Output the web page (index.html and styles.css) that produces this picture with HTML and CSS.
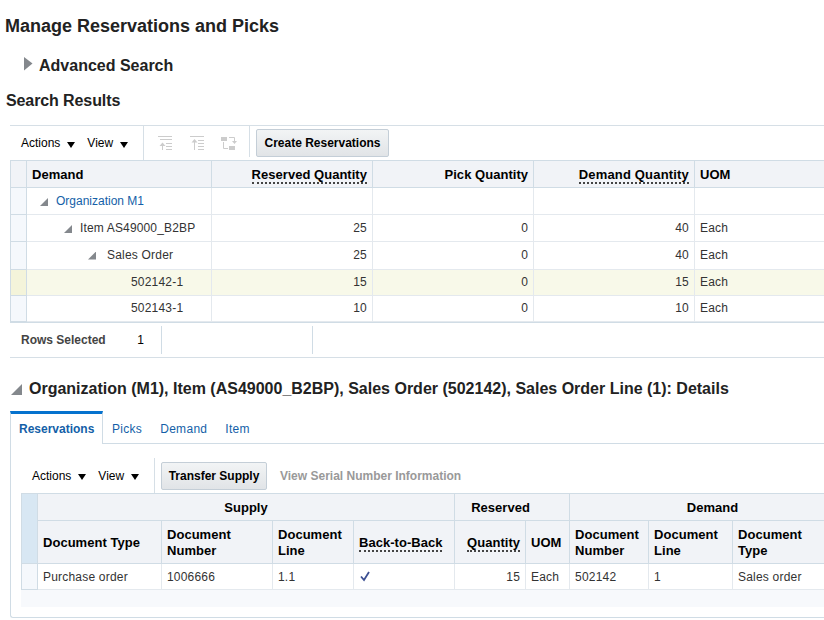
FILE: index.html
```html
<!DOCTYPE html>
<html lang="en">
<head>
    <meta charset="UTF-8">
    <title>Manage Reservations and Picks</title>
    <link rel="stylesheet" href="styles.css">
</head>
<body>
    <main>
        <h1><span>Manage Reservations and Picks</span></h1>
        <h2 class="advanced">
            <svg class="closed" width="9" height="14" viewBox="0 0 9 14"><path d="M0 0L8.500 6.500L0 13.500z"/></svg>
            <span>Advanced Search</span>
        </h2>
        <h2 class="results-title"><span>Search Results</span></h2>

        <section class="results">
            <div class="toolbar">
                <div class="menus">
                    <a class="menu">Actions</a>
                    <a class="menu">View</a>
                </div>
                <div class="icons">
                    <svg width="16" height="16" viewBox="0 0 16 16"><path d="M1 1.500h14M3 4.500h12M9 8.500h6M9 11.500h6M9 14.500h6M5.500 9v6"/><path class="fill" d="M2.500 11L5.500 7.500l3 3.500z"/></svg>
                    <svg width="16" height="16" viewBox="0 0 16 16"><path d="M1 1.500h14M9 5.500h6M9 8.500h6M9 11.500h6M9 14.500h6M5.500 5v10"/><path class="fill" d="M2.500 7.500L5.500 4l3 3.500z"/></svg>
                    <svg width="16" height="16" viewBox="0 0 16 16"><path class="fill" d="M0 2h6v4H0zM8 11h6v4H8z"/><path d="M2.500 7v6.500H7M8 2.500h5.500V6"/><path class="fill" d="M11 6h5l-2.500 3z"/></svg>
                </div>
                <button class="button">Create Reservations</button>
            </div>
            <table class="demand-table">
                <colgroup>
                    <col class="w-handle"><col class="w-demand"><col class="w-qty"><col class="w-qty"><col class="w-qty"><col>
                </colgroup>
                <thead>
                    <tr>
                        <th></th>
                        <th>Demand</th>
                        <th class="num"><span class="dotted">Reserved Quantity</span></th>
                        <th class="num">Pick Quantity</th>
                        <th class="num"><span class="dotted wide">Demand Quantity</span></th>
                        <th>UOM</th>
                    </tr>
                </thead>
                <tbody>
                    <tr>
                        <td></td>
                        <td class="level-1"><i class="open"></i><a>Organization M1</a></td>
                        <td></td><td></td><td></td><td></td>
                    </tr>
                    <tr>
                        <td></td>
                        <td class="level-2"><i class="open"></i>Item AS49000_B2BP</td>
                        <td class="num">25</td><td class="num">0</td><td class="num">40</td><td>Each</td>
                    </tr>
                    <tr class="tall">
                        <td></td>
                        <td class="level-3"><i class="open"></i>Sales Order</td>
                        <td class="num">25</td><td class="num">0</td><td class="num">40</td><td>Each</td>
                    </tr>
                    <tr class="short selected">
                        <td></td>
                        <td class="level-4">502142-1</td>
                        <td class="num">15</td><td class="num">0</td><td class="num">15</td><td>Each</td>
                    </tr>
                    <tr class="short">
                        <td></td>
                        <td class="level-4">502143-1</td>
                        <td class="num">10</td><td class="num">0</td><td class="num">10</td><td>Each</td>
                    </tr>
                </tbody>
            </table>
            <div class="status">
                <div class="status-rows"><b>Rows Selected</b><span>1</span></div>
                <div class="status-empty"></div>
            </div>
        </section>

        <h2 class="details-title"><i class="open big"></i><span>Organization (M1), Item (AS49000_B2BP), Sales Order (502142), Sales Order Line (1): Details</span></h2>
        <nav class="tabs">
            <a class="tab active">Reservations</a>
            <div class="tab-rest">
                <a class="tab">Picks</a>
                <a class="tab">Demand</a>
                <a class="tab">Item</a>
            </div>
        </nav>
        <section class="panel">
            <div class="toolbar">
                <div class="menus">
                    <a class="menu">Actions</a>
                    <a class="menu">View</a>
                </div>
                <button class="button">Transfer Supply</button>
                <span class="disabled">View Serial Number Information</span>
            </div>
            <div class="supply-wrap">
                <table class="supply-table">
                    <colgroup>
                        <col class="w-handle"><col class="w-type"><col class="w-number"><col class="w-line"><col class="w-back"><col class="w-quantity"><col class="w-uom"><col class="w-dnumber"><col class="w-dline"><col>
                    </colgroup>
                    <thead>
                        <tr class="groups">
                            <th rowspan="2" class="corner"></th>
                            <th colspan="4">Supply</th>
                            <th colspan="2" class="reserved">Reserved</th>
                            <th colspan="3">Demand</th>
                        </tr>
                        <tr class="columns">
                            <th>Document Type</th>
                            <th>Document<br>Number</th>
                            <th>Document<br>Line</th>
                            <th><span class="dotted">Back-to-Back</span></th>
                            <th class="num"><span class="dotted">Quantity</span></th>
                            <th>UOM</th>
                            <th>Document<br>Number</th>
                            <th>Document<br>Line</th>
                            <th>Document<br>Type</th>
                        </tr>
                    </thead>
                    <tbody>
                        <tr>
                            <td></td>
                            <td>Purchase order</td>
                            <td>1006666</td>
                            <td>1.1</td>
                            <td><svg class="check" width="12" height="11" viewBox="0 0 12 11"><path d="M2 5.500l3 3.500L10 1"/></svg></td>
                            <td class="num">15</td>
                            <td>Each</td>
                            <td>502142</td>
                            <td>1</td>
                            <td>Sales order</td>
                        </tr>
                    </tbody>
                </table>
            </div>
        </section>
    </main>
</body>
</html>
```
FILE: styles.css
```css
* {
    box-sizing: border-box;
}
body {
    margin: 0;
    background: #fff;
    color: #333;
    font: 12px/16px "Liberation Sans", Arial, sans-serif;
    overflow: hidden;
}
main {
    height: 620px;
    overflow: hidden;
    padding-top: 12px;
}
h1, h2 {
    margin: 0;
    color: #222;
    font-size: 16px;
    line-height: 20px;
    white-space: nowrap;
}
h1 {
    height: 28px;
    padding-left: 5px;
    font-size: 18px;
    line-height: 28px;
}
.advanced {
    display: flex;
    margin-top: 16px;
    padding-left: 24px;
    gap: 6px;
}
.closed {
    margin-top: 1px;
    fill: #84888d;
}
.results-title {
    margin-top: 15px;
    padding-left: 6px;
    letter-spacing: -0.1px;
}
.results {
    margin: 14px 0 0 10px;
    border-top: 1px solid #d6dfe6;
    border-bottom: 1px solid #d6dfe6;
}

/* toolbars */
.toolbar {
    display: flex;
    height: 34px;
    color: #000;
}
.menus {
    display: flex;
    width: 134px;
    height: 34px;
    padding-left: 11px;
    gap: 12px;
    line-height: 34px;
    border-right: 1px solid #d6dfe6;
}
.menu {
    display: flex;
    align-items: center;
    gap: 7px;
}
.menu:after {
    content: "";
    border: 4.5px solid transparent;
    border-top: 6px solid #000;
    border-bottom: 0;
    margin-top: 3px;
}
.icons {
    display: flex;
    width: 106px;
    height: 31px;
    padding: 9px 0 0 13px;
    gap: 16px;
    border-right: 1px solid #d6dfe6;
}
.icons path {
    fill: none;
    stroke: #ccc;
}
.icons .fill {
    fill: #ccc;
    stroke: none;
}
.button {
    height: 28px;
    margin: 3px 0 0 6px;
    padding: 0;
    width: 133px;
    background: linear-gradient(#f2f4f5, #e1e4e7);
    border: 1px solid #c4ced7;
    border-radius: 2px;
    color: #000;
    font: bold 12px "Liberation Sans", Arial, sans-serif;
    white-space: nowrap;
}

/* tables */
table {
    width: 100%;
    table-layout: fixed;
    border-collapse: separate;
    border-spacing: 0;
    border-left: 1px solid #d0dce5;
    border-top: 1px solid #d0dce5;
}
th, td {
    height: 27px;
    padding: 0 5px;
    border-right: 1px solid #e4e9ee;
    border-bottom: 1px solid #e4e9ee;
    text-align: left;
    white-space: nowrap;
}
td {
    letter-spacing: 0.2px;
}
th {
    padding-top: 2px;
    background: #f1f3f7;
    border-color: #d0dce5;
    color: #000;
    font-size: 13px;
    letter-spacing: 0.03px;
}
td:first-child {
    background: #f5f8fc;
    border-color: #d0dce5;
}
.demand-table tr > :last-child {
    border-right: 0;
}
.num {
    text-align: right;
}
.dotted {
    display: inline-block;
    height: 17px;
    border-bottom: 2px dotted #444;
}
.wide {
    letter-spacing: 0.18px;
}
.tall td {
    height: 28px;
    padding-bottom: 2px;
}
.short td {
    height: 26px;
    padding-bottom: 2px;
}
.selected td {
    background: #f8f9e9;
}
.selected td:first-child {
    background: #f4f4da;
}
a {
    color: #145fa8;
}
.menu {
    color: #000;
}
.w-handle { width: 16px; }
.w-demand { width: 185px; }
.w-qty { width: 161px; }
.w-type { width: 124px; }
.w-number { width: 111px; }
.w-line { width: 81px; }
.w-back { width: 101px; }
.w-quantity { width: 71px; }
.w-uom { width: 44px; }
.w-dnumber { width: 79px; }
.w-dline { width: 84px; }

.level-1 { padding-left: 13px; letter-spacing: 0; }
.level-2 { padding-left: 37px; letter-spacing: 0.15px; }
.level-3 { padding-left: 61px; }
.level-4 { padding-left: 104px; }
.open {
    display: inline-block;
    width: 8px;
    height: 8px;
    margin-right: 8px;
    vertical-align: -1px;
    background: #84888d;
    clip-path: polygon(100% 0, 100% 100%, 0 100%);
}
.level-3 .open {
    margin-right: 11px;
}
.open.big {
    width: 11px;
    height: 11px;
    margin-right: 7px;
}

.status {
    display: flex;
    height: 35px;
    border-top: 1px solid #d0dce5;
}
.status-rows, .status-empty {
    width: 152px;
    height: 28px;
    margin-top: 3px;
    border-right: 1px solid #d0dce5;
    line-height: 28px;
}
.status-empty {
    width: 151px;
}
.status-rows {
    display: flex;
    justify-content: space-between;
    padding: 0 17px 0 11px;
    color: #000;
}
.status-rows b {
    color: #444;
}

/* details */
.details-title {
    margin-top: 21px;
    padding-left: 11px;
}
.tabs {
    display: flex;
    height: 33px;
    margin: 12px 0 0 10px;
}
.tab {
    line-height: 36px;
    letter-spacing: 0.3px;
}
.active {
    width: 93px;
    padding-left: 8px;
    border: 1px solid #d0dce5;
    border-top: 3px solid #0572ce;
    border-bottom: 0;
    font-weight: bold;
    line-height: 30px;
    letter-spacing: 0;
}
.tab-rest {
    flex: 1;
    display: flex;
    padding-left: 9px;
    gap: 18px;
    border-bottom: 1px solid #d0dce5;
}
.panel {
    height: 174px;
    margin-left: 10px;
    padding: 14px 0 0 10px;
    border: 1px solid #d0dce5;
    border-top: 0;
    border-right: 0;
    border-bottom-left-radius: 3px;
}
.panel .toolbar, .panel .menus {
    height: 35px;
}
.panel .button {
    width: 106px;
    margin-top: 4px;
}
.disabled {
    padding-left: 13px;
    color: #999;
    font-weight: bold;
    line-height: 36px;
}
.supply-wrap {
    height: 114px;
    overflow: hidden;
    background: #f7f9fc;
}
.supply-table {
    width: 835px;
}
.supply-table td {
    background: #fff;
}
.supply-table td:first-child {
    background: #f5f8fc;
}
.supply-table tbody td {
    height: 26px;
}
.groups th {
    text-align: center;
}
.groups .reserved {
    padding-right: 28px;
}
.groups .corner {
    background: #d8e7f3;
}
.columns th {
    height: 43px;
}
.check {
    display: block;
    fill: none;
    stroke: #3c4f92;
    stroke-width: 1.8;
}
```
